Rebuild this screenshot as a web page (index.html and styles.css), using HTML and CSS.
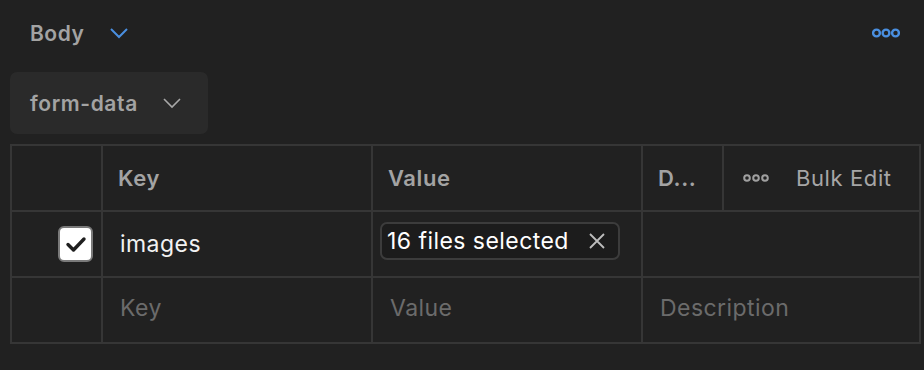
FILE: index.html
```html
<!DOCTYPE html>
<html>
<head>
    <meta charset="UTF-8">
    <title>Body</title>
    <link rel="stylesheet" href="styles.css">
</head>
<body>
    <div class="body-header">
        <div class="body-title">
            <span>Body</span>
            <svg class="chevron blue" width="20" height="12" viewBox="0 0 20 12"><path d="M2 2l8 8 8-8" fill="none" stroke="currentColor" stroke-width="2"/></svg>
        </div>
        <svg class="more-blue" width="28" height="12" viewBox="0 0 28 12">
            <circle cx="4.5" cy="6" r="3.4" fill="none" stroke="currentColor" stroke-width="2.4"/>
            <circle cx="14" cy="6" r="3.4" fill="none" stroke="currentColor" stroke-width="2.4"/>
            <circle cx="23.5" cy="6" r="3.4" fill="none" stroke="currentColor" stroke-width="2.4"/>
        </svg>
    </div>

    <div class="type-select">
        <span>form-data</span>
        <svg class="chevron" width="20" height="12" viewBox="0 0 20 12"><path d="M2 2l8 8 8-8" fill="none" stroke="currentColor" stroke-width="1.6"/></svg>
    </div>

    <div class="kv-table">
        <div class="cell"></div>
        <div class="cell head">Key</div>
        <div class="cell head">Value</div>
        <div class="cell head">D...</div>
        <div class="cell head tools">
            <svg class="more-grey" width="26" height="10" viewBox="0 0 26 10">
                <circle cx="4" cy="5" r="2.8" fill="none" stroke="currentColor" stroke-width="2"/>
                <circle cx="13" cy="5" r="2.8" fill="none" stroke="currentColor" stroke-width="2"/>
                <circle cx="22" cy="5" r="2.8" fill="none" stroke="currentColor" stroke-width="2"/>
            </svg>
            <span class="bulk-edit">Bulk Edit</span>
        </div>

        <div class="cell check-cell">
            <span class="checkbox">
                <svg width="22" height="18" viewBox="0 0 22 18"><path d="M3 9.5l5.5 5.5L19 4" fill="none" stroke="#1f1f1f" stroke-width="3.4" stroke-linecap="round" stroke-linejoin="round"/></svg>
            </span>
        </div>
        <div class="cell">images</div>
        <div class="cell file-cell">
            <span class="file-chip">
                16 files selected
                <svg width="18" height="18" viewBox="0 0 18 18"><path d="M2 2l14 14M16 2L2 16" stroke="#bdbdbd" stroke-width="1.8"/></svg>
            </span>
        </div>
        <div class="cell span-2"></div>

        <div class="cell"></div>
        <div class="cell placeholder">Key</div>
        <div class="cell placeholder">Value</div>
        <div class="cell placeholder span-2">Description</div>
    </div>
</body>
</html>
```

FILE: styles.css
```css
body {
    font-family: Inter, "Noto Sans", sans-serif;
    background-color: #212121;
    color: #fff;
    margin: 0;
    padding: 0 3px 0 10px;
    width: 911px;
    height: 370px;
    overflow: hidden;
}

.body-header {
    height: 66px;
    display: flex;
    align-items: center;
    justify-content: space-between;
    padding: 0 21px 0 20px;
}

.body-title {
    display: flex;
    align-items: center;
    gap: 25px;
    font-size: 21px;
    font-weight: 600;
    letter-spacing: 0.5px;
    color: #a3a3a3;
}

.chevron {
    color: #a8a8a8;
}

.chevron.blue {
    color: #4a8fe0;
}

.more-blue {
    color: #4a8fe0;
}

.type-select {
    width: 198px;
    height: 62px;
    margin-top: 6px;
    box-sizing: border-box;
    padding: 0 26px 0 20px;
    display: flex;
    align-items: center;
    justify-content: space-between;
    background-color: #2a2a2a;
    border-radius: 7px;
    font-size: 21px;
    font-weight: 600;
    letter-spacing: 0.6px;
    color: #a3a3a3;
}

.kv-table {
    margin-top: 10px;
    display: grid;
    grid-template-columns: 89px 268px 268px 79px 1fr;
    grid-auto-rows: 64px;
    gap: 2px;
    padding: 2px;
    background-color: #363636;
}

.cell {
    background-color: #212121;
    display: flex;
    align-items: center;
    padding-left: 17px;
    font-size: 23px;
    letter-spacing: 0.45px;
    color: #f2f2f2;
}

.cell.head {
    font-weight: 600;
    font-size: 22px;
    letter-spacing: 0.6px;
    color: #a3a3a3;
    padding-left: 15px;
}

.cell.tools {
    padding-left: 19px;
    gap: 27px;
}

.more-grey {
    color: #a0a0a0;
}

.bulk-edit {
    font-weight: 400;
    color: #a6a6a6;
}

.span-2 {
    grid-column: span 2;
}

.check-cell {
    justify-content: flex-end;
    padding-left: 0;
    padding-right: 8px;
}

.checkbox {
    width: 31px;
    height: 32px;
    border: 2px solid #7a7a7a;
    border-radius: 6px;
    background-color: #fff;
    display: flex;
    align-items: center;
    justify-content: center;
}

.file-cell {
    padding-left: 7px;
    padding-bottom: 6px;
}

.file-chip {
    height: 38px;
    box-sizing: border-box;
    display: flex;
    align-items: center;
    gap: 19px;
    padding: 0 12px 0 5px;
    border: 2px solid #3c3c3c;
    border-radius: 7px;
    background-color: #1c1c1c;
    color: #fff;
}

.placeholder {
    color: #6b6b6b;
    padding-bottom: 5px;
}
```
